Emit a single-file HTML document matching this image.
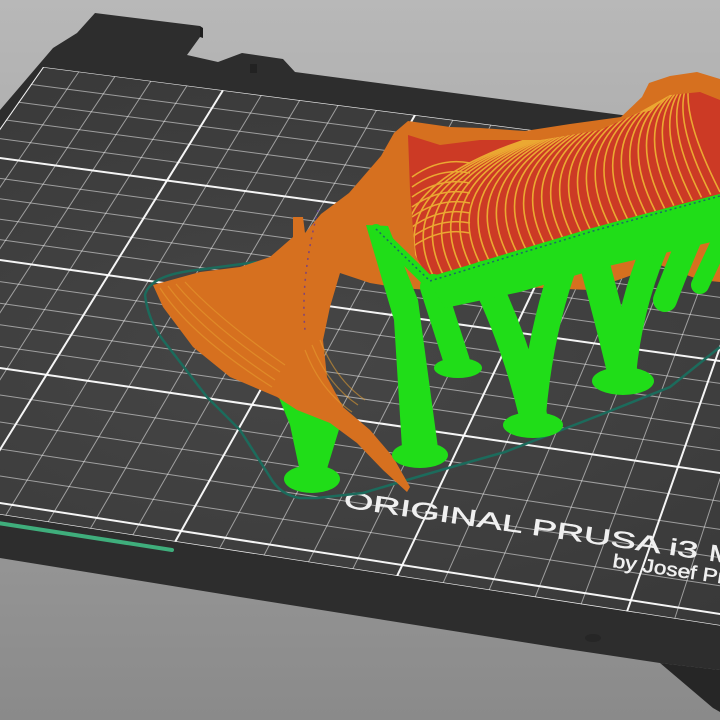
<!DOCTYPE html>
<html><head><meta charset="utf-8"><style>
html,body{margin:0;padding:0;background:#a0a0a0;}
svg{display:block}
</style></head><body>
<svg id="s" width="720" height="720" viewBox="0 0 720 720" xmlns="http://www.w3.org/2000/svg">
<defs>
<linearGradient id="bg" x1="0" y1="0" x2="0" y2="1">
<stop offset="0" stop-color="#b8b8b8"/><stop offset="1" stop-color="#8a8a8a"/>
</linearGradient>
<radialGradient id="gg" cx="0.45" cy="0.5" r="0.6">
<stop offset="0" stop-color="#464646"/><stop offset="1" stop-color="#383838"/>
</radialGradient>
<clipPath id="gclip"><polygon points="43,67 965,186 865,648 -244,477"/></clipPath>
<clipPath id="rclip"><polygon points="408,135 440,145 480,140 540,140 600,130 640,112 670,95 700,92 720,100 720,195 650,213 593,230 500,258 430,280 415,255 410,190"/></clipPath>
</defs>
<rect width="720" height="720" fill="url(#bg)"/>
<polygon points="0,110 53,48 77,33 95,13 200,26 200,37 187,55 218,62 242,53 283,59 295,72 720,128 720,670 660,663 560,648 240,597 0,558" fill="#2d2d2d"/>
<polygon points="660,663 720,670 720,712 713,708" fill="#262626"/>
<polygon points="200,26 203,28 203,38 200,37" fill="#1e1e1e"/>
<rect x="250" y="64" width="7" height="9" fill="#222"/>
<ellipse cx="593" cy="638" rx="8" ry="4" fill="#262626"/>
<polygon points="43,67 965,186 865,648 -244,477" fill="url(#gg)"/>
<g id="grid" clip-path="url(#gclip)"></g>
<line x1="-2" y1="523" x2="172" y2="550" stroke="#3fae7c" stroke-width="4" stroke-linecap="round"/>
<g font-family="Liberation Sans, sans-serif" fill="#f0f0f0" stroke="#f0f0f0" stroke-width="0.5">
<text x="343" y="507" transform="rotate(8.3 343 507)" font-size="23" textLength="358" lengthAdjust="spacingAndGlyphs">ORIGINAL PRUSA i3</text>
<text x="712" y="507" transform="rotate(8.3 343 507)" font-size="23" textLength="60" lengthAdjust="spacingAndGlyphs">MK3</text>
<text x="612" y="567" transform="rotate(8.5 612 567)" font-size="19" textLength="150" lengthAdjust="spacingAndGlyphs">by Josef Prusa</text>
</g>
<path d="M257,262 L197,270 Q150,275 145,295 Q148,320 163,340 L207,397 L240,430 L270,477 Q280,495 300,498 L317,498 L363,493 Q440,470 505,452 L600,415 L670,387 L720,347" fill="none" stroke="#1c6b5c" stroke-width="2.5"/>
<g fill="#20dd18">
<polygon points="275,388 345,410 326,472 300,472 290,425"/>
<ellipse cx="312" cy="479" rx="28" ry="14"/>
</g>
<path d="M153,285 L200,272 L240,267 L270,257 L293,237 L293,217 L303,217 L305,233 L321,214 L349,193 L381,156 L394,133 L408,121 L450,127 L480,128 L525,131 L570,124 L621,117 L642,97 L649,83 L670,76 L697,72 L720,79 L720,282 L700,280 L660,265 L590,290 L520,287 L430,290 L400,288 L370,283 L340,273 L330,307 L323,340 L327,377 L343,407 L370,430 L393,457 L410,487 L407,492 L383,470 L357,443 L330,423 L297,410 L277,397 L230,377 L193,347 L163,307 Z" fill="#d6701f"/>
<g fill="none" stroke="#e8a030" stroke-width="1.2" opacity="0.55">
<path d="M160,288 Q190,335 272,387"/><path d="M168,286 Q200,330 275,380"/><path d="M176,284 Q210,325 280,372"/><path d="M185,282 Q220,320 285,365"/>
<path d="M305,350 Q320,390 352,412"/><path d="M312,345 Q328,385 358,405"/><path d="M320,340 Q336,380 365,400"/>
</g>
<path d="M318,210 Q300,280 305,330" fill="none" stroke="#5a30a0" stroke-width="1.5" stroke-dasharray="2 5" opacity="0.7"/>
<polygon points="408,135 440,145 480,140 540,140 600,130 640,112 670,95 700,92 720,100 720,195 650,213 593,230 500,258 430,280 415,255 410,190" fill="#cc3a25"/>
<g id="stripes" clip-path="url(#rclip)" fill="none" stroke="#eba832" stroke-width="1.6"></g>
<g fill="none" stroke="#20dd18" stroke-linecap="round">
<path d="M433,287 L457,362" stroke-width="26"/>
<path d="M483,275 Q515,340 533,415" stroke-width="28"/>
<path d="M567,257 Q540,330 533,415" stroke-width="26"/>
<path d="M590,247 Q610,320 623,375" stroke-width="30"/>
<path d="M660,235 Q630,300 623,375" stroke-width="26"/>
<path d="M700,215 Q680,260 665,300" stroke-width="24"/>
<path d="M722,238 L700,285" stroke-width="18"/>
<path d="M376,230 L430,283 L593,234 L720,200" stroke-width="12"/>
</g>
<g fill="#20dd18">
<polygon points="430,283 593,232 720,196 720,240 600,268 520,292 445,308"/>
<polygon points="366,225 388,226 418,300 438,448 402,448 394,320"/>
<ellipse cx="420" cy="455" rx="28" ry="13"/>
<ellipse cx="458" cy="368" rx="24" ry="10"/>
<ellipse cx="533" cy="425" rx="30" ry="13"/>
<ellipse cx="623" cy="381" rx="31" ry="14"/>
</g>
<path d="M376,229 L430,281 L593,231 L720,196" fill="none" stroke="#1a3a8a" stroke-width="1.5" stroke-dasharray="2 3" opacity="0.7"/>
</svg>
<script>
(function(){
var NS="http://www.w3.org/2000/svg";
var g=document.getElementById("grid");
function pw(arr,step,v){var i=Math.floor(v/step);if(i>=arr.length-1)i=arr.length-2;var t=(v-i*step)/step;return arr[i]+(arr[i+1]-arr[i])*t;}
var TX=[43,223,415,605,785,965],BX=[-244,-37,175,397,627,865];
function ln(x1,y1,x2,y2,w,o){var l=document.createElementNS(NS,"line");l.setAttribute("x1",x1);l.setAttribute("y1",y1);l.setAttribute("x2",x2);l.setAttribute("y2",y2);l.setAttribute("stroke","#fff");l.setAttribute("stroke-width",w);l.setAttribute("stroke-opacity",o);g.appendChild(l);}
for(var u=0;u<=250;u+=10){var tx=pw(TX,50,u),bx=pw(BX,50,u);var ty=67+0.129*(tx-43),by=515+0.154*bx;var m=(u%50==0);ln(tx,ty,bx,by,m?2:1,m?0.95:0.5);}
var YL=[61,158,260,368,503],YR=[154,255,361,473,614];
function yv(arr,v){if(v<=200)return pw(arr,50,v);return arr[4]+(v-200)*1.2;}
for(var v=0;v<=210;v+=10){var a=yv(YL,v),b=yv(YR,v);var s=(b-a)/720;var m=(v%50==0)||v==210;ln(-300,a-300*s,1000,a+1000*s,m?2:1,m?0.95:0.5);}
var st=document.getElementById("stripes");
for(var i=0;i<34;i++){var t=i/33;var px=415+t*305,py=282-t*90;var qx=690-(1-t)*40,qy=80+(1-t)*30;var cx=px-60+t*20,cy=qy+(py-qy)*0.3;
var p=document.createElementNS(NS,"path");p.setAttribute("d","M"+px+","+py+" Q"+cx+","+cy+" "+qx+","+qy);st.appendChild(p);}
for(var j=0;j<8;j++){var y=165+j*10;var p2=document.createElementNS(NS,"path");p2.setAttribute("d","M412,"+(y+12)+" Q440,"+(y-8)+" 470,"+(y-2));st.appendChild(p2);}
})();
</script>
</body></html>
